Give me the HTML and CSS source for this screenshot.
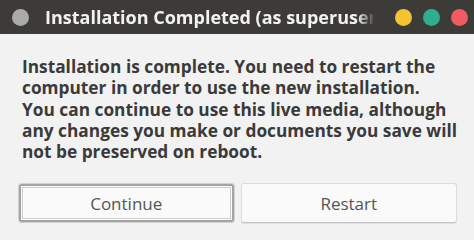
FILE: index.html
```html
<!DOCTYPE html>
<html lang="en">
<head>
  <meta charset="UTF-8">
  <title>Installation Completed</title>
  <link rel="stylesheet" href="styles.css">
</head>
<body>

  <div class="window">
    <div class="titlebar">
      <span class="dot grey"></span>
      <div class="title">Installation Completed (as superuser)</div>
      <div class="controls">
        <span class="dot yellow"></span>
        <span class="dot green"></span>
        <span class="dot red"></span>
      </div>
    </div>

    <div class="content">
      <p class="message">Installation is complete. You need to restart the<br>
        computer in order to use the new installation.<br>
        You can continue to use this live media, although<br>
        any changes you make or documents you save will<br>
        not be preserved on reboot.</p>

      <div class="buttons">
        <button type="button" class="btn continuer">Continue</button>
        <button type="button" class="btn">Restart</button>
      </div>
    </div>
  </div>

</body>
</html>
```

FILE: styles.css
```css
body {
  margin: 0;
  font-family: "Open Sans", "DejaVu Sans", sans-serif;
  background: #f2f2f2;
}
.window {
  width: 474px;
  height: 240px;
  overflow: hidden;
}
.titlebar {
  height: 34px;
  background: #3c3b37;
  display: flex;
  align-items: center;
  padding: 0 6px 0 12px;
}
.title {
  flex: 1;
  margin-left: 16px;
  color: #f2f2f2;
  font-size: 18px;
  font-weight: bold;
  white-space: nowrap;
  overflow: hidden;
  -webkit-mask-image: linear-gradient(to right, #000 312px, transparent 330px);
  mask-image: linear-gradient(to right, #000 312px, transparent 330px);
}
.controls {
  display: flex;
  gap: 11px;
  margin-left: 6px;
}
.dot {
  display: block;
  width: 17px;
  height: 17px;
  border-radius: 50%;
  flex-shrink: 0;
}
.grey {
  background: #aaaaa8;
}
.yellow {
  background: #f4c233;
}
.green {
  background: #2fae8c;
}
.red {
  background: #ef5a63;
}
.content {
  padding: 22px 17px 0 18px;
}
.message {
  margin: 0 0 0 4px;
  color: #3a3a3a;
  font-size: 17.3px;
  font-weight: bold;
  line-height: 21.25px;
  white-space: nowrap;
}
.buttons {
  display: flex;
  gap: 6px;
  margin-top: 21px;
}
.btn {
  flex: 1;
  height: 40px;
  background: #fafafa;
  border: 1px solid #dcdcdc;
  border-bottom-color: #c4c4c4;
  border-radius: 3px;
  color: #555;
  font-family: inherit;
  font-size: 17px;
  box-shadow: 0 1px 1px rgba(0, 0, 0, 0.08);
}
.continuer {
  border-color: #d2d2d2;
  box-shadow: inset 0 0 0 2px #a4a4a4, inset 0 0 0 3px #fafafa, inset 0 0 0 4px #cdcdcd;
}
```
